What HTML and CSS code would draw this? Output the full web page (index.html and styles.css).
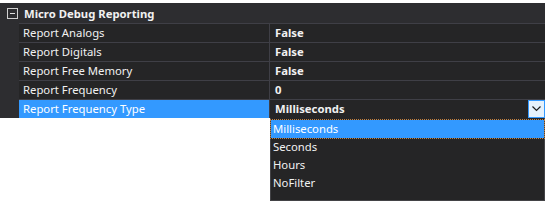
FILE: index.html
```html
<!DOCTYPE html>
<html>
<head>
<meta charset="utf-8">
<link rel="stylesheet" href="styles.css">
</head>
<body>
<div class="grid">
  <div class="category">
    <span class="toggle"></span>
    <span class="cat-title">Micro Debug Reporting</span>
  </div>
  <div class="row">
    <div class="name">Report Analogs</div>
    <div class="value">False</div>
  </div>
  <div class="row">
    <div class="name">Report Digitals</div>
    <div class="value">False</div>
  </div>
  <div class="row">
    <div class="name">Report Free Memory</div>
    <div class="value">False</div>
  </div>
  <div class="row">
    <div class="name">Report Frequency</div>
    <div class="value">0</div>
  </div>
  <div class="row selected">
    <div class="name">Report Frequency Type</div>
    <div class="value">
      <span class="val-text">Milliseconds</span>
      <span class="drop-btn">
        <svg width="9" height="6" viewBox="0 0 9 6"><path d="M0.5 0.5 L4.5 4.5 L8.5 0.5" fill="none" stroke="#1e1e1e" stroke-width="1.2"/></svg>
      </span>
    </div>
  </div>
</div>
<div class="below">
  <div class="spacer"></div>
  <ul class="list">
    <li class="item active">Milliseconds</li>
    <li class="item">Seconds</li>
    <li class="item">Hours</li>
    <li class="item">NoFilter</li>
  </ul>
</div>
</body>
</html>
```
FILE: styles.css
```css
html, body {
  margin: 0;
  padding: 0;
  background: #ffffff;
}
body {
  padding-top: 3px;
  width: 545px;
  font-family: "Noto Sans", "Open Sans", sans-serif;
  font-size: 11.3px;
  color: #f1f1f1;
}
.grid {
  background: #2d2d30;
}
.category {
  height: 20px;
  display: flex;
  align-items: center;
}
.toggle {
  border: 1px solid #d0d0d0;
  margin-left: 7px;
  margin-right: 6px;
  position: relative;
  box-sizing: border-box;
  width: 11px;
  height: 11px;
}
.toggle::after {
  content: "";
  position: absolute;
  left: 2px;
  top: 4px;
  width: 5px;
  height: 1px;
  background: #e0e0e0;
}
.cat-title {
  font-weight: bold;
}
.row {
  display: flex;
  margin-left: 19px;
  height: 19px;
  border-top: 1px solid #3f3f46;
  box-sizing: border-box;
  background: #252526;
}
.name {
  width: 251px;
  padding-left: 4px;
  box-sizing: border-box;
  line-height: 18px;
  border-right: 1px solid #3f3f46;
}
.value {
  flex: 1;
  padding-left: 5px;
  font-weight: bold;
  line-height: 18px;
  display: flex;
  justify-content: space-between;
}
.row.selected .name {
  background: #3399ff;
  color: #ffffff;
}
.drop-btn {
  width: 17px;
  height: 18px;
  box-sizing: border-box;
  border: 1px solid #3399ff;
  background: #e5f1fb;
  display: flex;
  align-items: center;
  justify-content: center;
}
.below {
  display: flex;
}
.spacer {
  width: 270px;
}
.list {
  list-style: none;
  margin: 0;
  padding: 2px 0 8px 0;
  width: 275px;
  box-sizing: border-box;
  background: #252526;
  border: 1px solid #434346;
  border-top: none;
}
.item {
  height: 18px;
  line-height: 18px;
  padding-left: 2px;
}
.item.active {
  background: #3399ff;
  color: #ffffff;
  outline: 1px dotted #c08040;
  outline-offset: 0;
}
```
